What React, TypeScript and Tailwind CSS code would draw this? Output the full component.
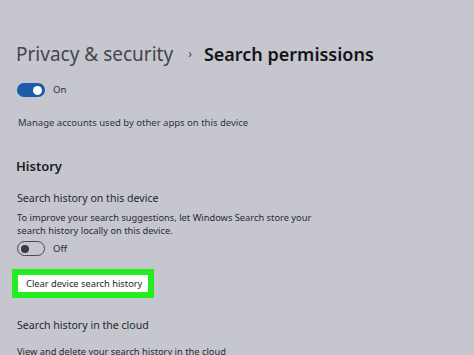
import React from "react";

function Toggle({ on }: { on: boolean }) {
  if (on) {
    return (
      <div className="flex h-[14px] w-[28px] items-center justify-end rounded-full bg-[#1c5ba8] pr-[3px]">
        <div className="h-[9px] w-[9px] rounded-full bg-white" />
      </div>
    );
  }
  return (
    <div className="flex h-[15px] w-[28px] items-center rounded-full border border-[#4a4a52] pl-[3px]">
      <div className="h-[8px] w-[8px] rounded-full bg-[#3a3a40]" />
    </div>
  );
}

export default function App() {
  return (
    <div
      className="h-[355px] w-[474px] overflow-hidden bg-[#c5c6ce] pl-4 text-[#1b1b1f]"
      style={{ fontFamily: '"Noto Sans", "Open Sans", sans-serif' }}
    >
      <div className="flex items-center pt-[40px] leading-[28px]">
        <span className="text-[19px] text-[#45454b]">Privacy &amp; security</span>
        <span className="ml-[15px] mr-[12px] text-[12px] text-[#45454b]">›</span>
        <span className="text-[18px] font-semibold text-[#141418]">Search permissions</span>
      </div>

      <div className="mt-[15px] flex items-center gap-2 pl-px">
        <Toggle on />
        <span className="text-[9.5px] text-[#2a2a30]">On</span>
      </div>

      <div className="mt-[19px] pl-[2px] text-[9.5px] leading-[14px] text-[#2c3448]">
        Manage accounts used by other apps on this device
      </div>

      <div className="mt-[27px] text-[13px] font-semibold leading-[18px]">History</div>

      <div className="mt-[15px] pl-px text-[10.6px] leading-[16px] text-[#26262b]">
        Search history on this device
      </div>
      <div className="mt-[5px] w-[300px] pl-px text-[9.3px] leading-[13px] text-[#2a2a30]">
        To improve your search suggestions, let Windows Search store your search history locally on this device.
      </div>

      <div className="mt-[4px] flex items-center gap-2 pl-px">
        <Toggle on={false} />
        <span className="text-[9.5px] text-[#2a2a30]">Off</span>
      </div>

      <div className="ml-[-4px] mt-[13px] w-fit bg-[#22ee22] p-[6px]">
        <div className="bg-white pl-[8px] pr-[6px] text-[9.3px] leading-[17px] text-[#1f1f24]">
          Clear device search history
        </div>
      </div>

      <div className="mt-[19px] pl-px text-[10.6px] leading-[16px] text-[#26262b]">
        Search history in the cloud
      </div>
      <div className="mt-[12px] pl-px text-[9.3px] leading-[14px] text-[#2a2a30]">
        View and delete your search history in the cloud
      </div>
    </div>
  );
}
